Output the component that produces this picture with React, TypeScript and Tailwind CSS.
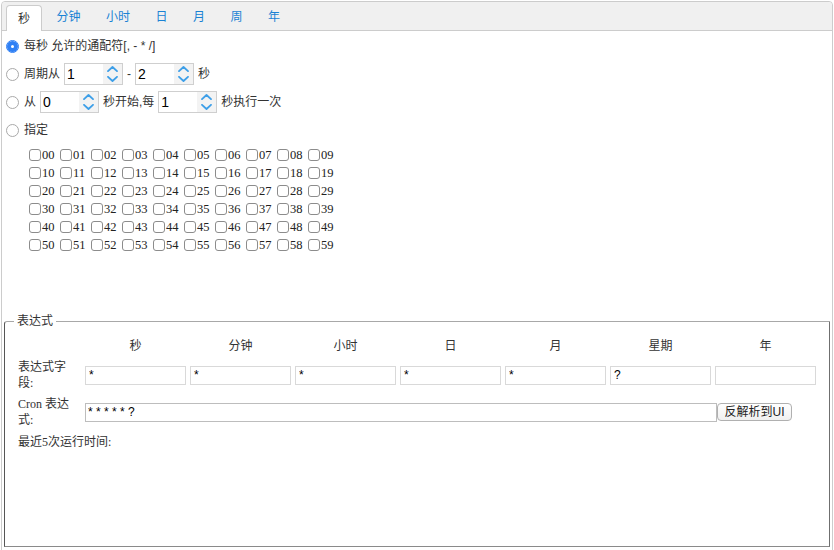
import { useState } from "react"

const sans = "font-['Liberation_Sans','Noto_Sans_CJK_SC',sans-serif]"
const serif = "font-['Liberation_Serif','Noto_Sans_CJK_SC',serif]"

const tabs = ["秒", "分钟", "小时", "日", "月", "周", "年"]
const fields = ["秒", "分钟", "小时", "日", "月", "星期", "年"]
const values = ["*", "*", "*", "*", "*", "?", ""]

function Chevron({ up }: { up?: boolean }) {
  return (
    <svg width="11" height="6" viewBox="0 0 11 6">
      <path
        d={up ? "M1 5.2L5.5 1L10 5.2" : "M1 0.8L5.5 5L10 0.8"}
        stroke="#3d9fe8"
        strokeWidth="1.8"
        fill="none"
        strokeLinecap="round"
        strokeLinejoin="round"
      />
    </svg>
  )
}

function NumberBox({ value }: { value: string }) {
  return (
    <div className="flex h-[22px] w-[59px] border border-[#cfcfcf] bg-white">
      <input
        readOnly
        value={value}
        className={`${sans} min-w-0 flex-1 bg-transparent pl-[2px] text-[14px] text-black outline-none`}
      />
      <div className="flex w-[19px] flex-col items-center justify-center gap-[4px] bg-[#f3f3f3]">
        <Chevron up />
        <Chevron />
      </div>
    </div>
  )
}

function Radio({ checked, onChange }: { checked: boolean; onChange: () => void }) {
  return (
    <input
      type="radio"
      checked={checked}
      onChange={onChange}
      className="m-0 h-[13px] w-[13px] shrink-0 appearance-none rounded-full border border-[#a9a9a9] bg-white checked:border-[#2f80f5] checked:shadow-[inset_0_0_0_4px_#2f80f5]"
    />
  )
}

export default function App() {
  const [mode, setMode] = useState(0)
  const [picked, setPicked] = useState<number[]>([])

  const toggle = (n: number) =>
    setPicked((p) => (p.includes(n) ? p.filter((x) => x !== n) : [...p, n]))

  return (
    <div className={`${sans} ml-px mt-px w-[832px] rounded-t-[4px] border border-[#cccccc] bg-white pb-[6px] text-[12px] text-[#333]`}>
      {/* Tabs */}
      <div className="flex h-[29px] items-end gap-[3.5px] rounded-t-[4px] border-b border-[#cccccc] bg-[#f0f0f0] pl-[4px]">
        {tabs.map((t, i) => (
          <div
            key={t}
            className={
              i === 0
                ? "-mb-px flex h-[26px] items-center rounded-t-[4px] border border-b-0 border-[#cccccc] bg-white px-[11px] text-[#333]"
                : "flex h-[26px] items-center px-[11px] text-[#1a82d4]"
            }
          >
            {t}
          </div>
        ))}
      </div>

      {/* Panel */}
      <div className="h-[282px] pl-[4px] pt-[1px]">
        <div className="flex h-[28px] items-center gap-[5px]">
          <Radio checked={mode === 0} onChange={() => setMode(0)} />
          <span>每秒 允许的通配符[, - * /]</span>
        </div>
        <div className="flex h-[28px] items-center">
          <Radio checked={mode === 1} onChange={() => setMode(1)} />
          <span className="ml-[5px] mr-[4px]">周期从</span>
          <NumberBox value="1" />
          <span className="mx-[4px]">-</span>
          <NumberBox value="2" />
          <span className="ml-[4px]">秒</span>
        </div>
        <div className="flex h-[28px] items-center">
          <Radio checked={mode === 2} onChange={() => setMode(2)} />
          <span className="ml-[5px] mr-[4px]">从</span>
          <NumberBox value="0" />
          <span className="mx-[4px]">秒开始,每</span>
          <NumberBox value="1" />
          <span className="ml-[4px]">秒执行一次</span>
        </div>
        <div className="flex h-[28px] items-center gap-[5px]">
          <Radio checked={mode === 3} onChange={() => setMode(3)} />
          <span>指定</span>
        </div>

        <div className={`${serif} ml-[23px] mt-[2px] grid grid-cols-[repeat(10,31px)] text-[#222]`}>
          {Array.from({ length: 60 }, (_, n) => (
            <label key={n} className="flex h-[18px] items-center">
              <input
                type="checkbox"
                checked={picked.includes(n)}
                onChange={() => toggle(n)}
                className="m-0 h-[12px] w-[12px] shrink-0 appearance-none rounded-[3px] border border-[#8c8c8c] bg-white checked:bg-[#2f80f5]"
              />
              <span className="ml-[1px] text-[12.5px]">{String(n).padStart(2, "0")}</span>
            </label>
          ))}
        </div>
      </div>

      {/* Expression */}
      <fieldset className="mx-[2px] h-[234px] rounded-tl-[3px] border border-b-[#8a8a8a] border-l-[#555] border-r-[#6f6f6f] border-t-[#a8a8a8] pl-[9px]">
        <legend className={`${serif} px-[3px] leading-[16px]`}>表达式</legend>
        <div className={`${serif} ml-[4px] mt-[9px] grid grid-cols-[67px_repeat(7,105px)] items-center gap-y-[5px] leading-[16px] text-[#333]`}>
          <div />
          {fields.map((f) => (
            <div key={f} className="pr-[4px] text-center">
              {f}
            </div>
          ))}

          <div className="pr-[6px]">表达式字段:</div>
          {values.map((v, i) => (
            <div key={i} className="pr-[4px]">
              <input
                readOnly
                value={v}
                className={`${sans} h-[19px] w-full border border-[#d9d9d9] px-[3px] text-[12px] text-black outline-none`}
              />
            </div>
          ))}

          <div className="pr-[6px]">Cron 表达式:</div>
          <div className="col-span-7 flex items-center">
            <input
              readOnly
              value="* * * * * ?"
              className={`${sans} h-[19px] w-[632px] border border-[#bdbdbd] px-[2px] text-[12px] text-black outline-none`}
            />
            <button
              className={`${sans} h-[18px] w-[75px] rounded-[4px] border border-[#b0b0b0] bg-gradient-to-b from-white to-[#f0f0f0] text-[12px] leading-none text-[#222]`}
            >
              反解析到UI
            </button>
          </div>

          <div className="col-span-8 mt-[1px]">最近5次运行时间:</div>
        </div>
      </fieldset>
    </div>
  )
}
